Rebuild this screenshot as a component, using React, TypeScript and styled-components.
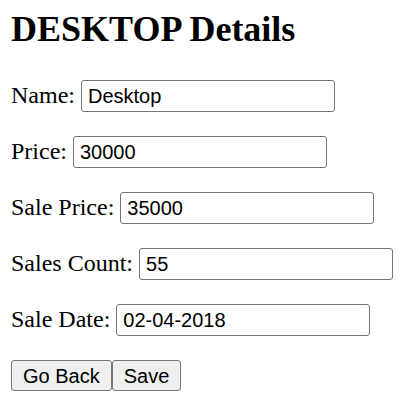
import React from "react";
import styled, { createGlobalStyle } from "styled-components";

const Global = createGlobalStyle`
  html, body { margin: 0; padding: 0; background: #ffffff; }
  body { font-family: "Liberation Serif", "Times New Roman", serif; color: #000; }
`;

const Page = styled.div`
  padding: 0 11px;
  display: flex;
  flex-direction: column;
`;

const Title = styled.h2`
  margin: 9px 0 30px;
  font-family: "Liberation Serif", "Times New Roman", serif;
  font-size: 36px;
  line-height: 41px;
  font-weight: bold;
`;

const Field = styled.div`
  display: flex;
  align-items: baseline;
  gap: 6px;
  margin-bottom: 24px;
`;

const Label = styled.label`
  font-family: "Liberation Serif", "Times New Roman", serif;
  font-size: 24px;
  line-height: 28px;
`;

const TextInput = styled.input`
  box-sizing: border-box;
  width: 254px;
  height: 32px;
  padding: 0 6px;
  border: 1px solid #767676;
  border-radius: 3px;
  background: #fff;
  color: #000;
  font-family: "Liberation Sans", Arial, sans-serif;
  font-size: 20px;
  outline: none;
`;

const Actions = styled.div`
  display: flex;
`;

const Button = styled.button`
  box-sizing: border-box;
  height: 31px;
  padding: 0 11px;
  border: 1px solid #767676;
  border-radius: 3px;
  background: #efefef;
  color: #000;
  font-family: "Liberation Sans", Arial, sans-serif;
  font-size: 20px;
  line-height: 1;
  cursor: pointer;
`;

const fields = [
  { label: "Name:", value: "Desktop" },
  { label: "Price:", value: "30000" },
  { label: "Sale Price:", value: "35000" },
  { label: "Sales Count:", value: "55" },
  { label: "Sale Date:", value: "02-04-2018" },
];

export default function App() {
  return (
    <>
      <Global />
      <Page>
        <Title>DESKTOP Details</Title>
        {fields.map((f) => (
          <Field key={f.label}>
            <Label>{f.label}</Label>
            <TextInput type="text" defaultValue={f.value} />
          </Field>
        ))}
        <Actions>
          <Button>Go Back</Button>
          <Button>Save</Button>
        </Actions>
      </Page>
    </>
  );
}
